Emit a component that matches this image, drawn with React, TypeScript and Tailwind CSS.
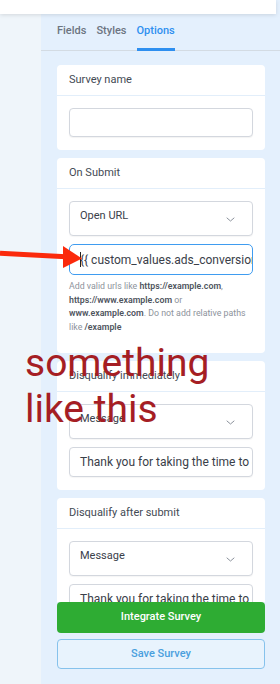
import React from "react";

const Chevron = () => (
  <svg width="9" height="5" viewBox="0 0 9 5" className="shrink-0">
    <path d="M1 1l3.5 3 3.5-3" fill="none" stroke="#8b919b" strokeWidth="1" strokeLinecap="round" strokeLinejoin="round" />
  </svg>
);

const Select = ({ label }: { label: string }) => (
  <div className="h-[35px] rounded-[4px] border border-[#d3d7de] bg-white flex items-start justify-between pl-[10px] pr-[17px] shadow-[0_1px_1px_rgba(0,0,0,0.04)]">
    <span className="pt-[7px] text-[11px] leading-[14px] text-[#3a4049]">{label}</span>
    <span className="self-center pt-[2px]"><Chevron /></span>
  </div>
);

const TextInput = ({ value }: { value: string }) => (
  <div className="h-[30px] min-w-0 rounded-[4px] border border-[#d3d7de] bg-white flex items-center pl-[10px] overflow-hidden whitespace-nowrap shadow-[0_1px_1px_rgba(0,0,0,0.04)]">
    <span className="text-[12px] leading-[16px] text-[#3a4049]">{value}</span>
  </div>
);

const Card = ({ title, children, pb = "pb-[13px]" }: { title: string; children?: React.ReactNode; pb?: string }) => (
  <div className="w-[208px] bg-white rounded-[4px] shrink-0">
    <div className="h-[31px] flex items-center pl-[12px] border-b border-[#e2eefa] text-[11px] text-[#434a54]">{title}</div>
    <div className={`px-[12px] pt-[12px] ${pb} flex flex-col gap-[8px]`}>{children}</div>
  </div>
);

const B = ({ children }: { children: React.ReactNode }) => <span className="font-semibold text-[#4f555e]">{children}</span>;

export default function App() {
  return (
    <div className="relative w-[280px] h-[684px] overflow-hidden bg-[#e4f0fd] flex flex-col" style={{ fontFamily: "Roboto, 'Noto Sans', sans-serif" }}>
      <div className="relative z-10 h-[14px] w-[276px] bg-white shadow-[0_1px_4px_rgba(0,0,0,0.12)] shrink-0" />
      <div className="flex flex-1 min-h-0">
        <div className="w-[41px] bg-[#eff5fa] shrink-0" />
        <div className="w-[239px] min-w-0 flex flex-col min-h-0 overflow-hidden">
          <div className="h-[37px] border-b border-[#d3dbe3] flex gap-[10px] pl-[16px] shrink-0">
            <div className="pt-[10px] text-[11px] leading-[14px] font-medium text-[#6c7581]">Fields</div>
            <div className="pt-[10px] text-[11px] leading-[14px] font-medium text-[#6c7581]">Styles</div>
            <div className="pt-[10px] text-[11px] leading-[14px] font-medium text-[#2e8ff0] border-b-[3px] border-[#2e8ff0] h-[37px] mb-[-1px]">Options</div>
          </div>
          <div className="flex-1 min-h-0 overflow-hidden pt-[14px] pl-[16px] flex flex-col gap-[8px]">
            <Card title="Survey name">
              <div className="h-[29px] rounded-[4px] border border-[#d3d7de] bg-white shadow-[0_1px_1px_rgba(0,0,0,0.05)]" />
            </Card>
            <Card title="On Submit" pb="pb-[19px]">
              <Select label="Open URL" />
              <div className="h-[31px] min-w-0 rounded-[5px] border-[1.5px] border-[#3f9cf0] bg-white flex items-center pl-[10px] overflow-hidden whitespace-nowrap relative">
                <span className="text-[12px] leading-[16px] text-[#3a4049]">{"{{ custom_values.ads_conversion_url }}"}</span>
                <span className="absolute left-[10px] top-[7px] w-[1px] h-[15px] bg-[#222]" />
              </div>
              <p className="mt-[-3px] text-[8.8px] leading-[13.5px] text-[#8d939b] whitespace-nowrap">
                Add valid urls like <B>https://example.com</B>,<br />
                <B>https://www.example.com</B> or<br />
                <B>www.example.com</B>. Do not add relative paths<br />
                like <B>/example</B>
              </p>
            </Card>
            <Card title="Disqualify immediately">
              <Select label="Message" />
              <TextInput value="Thank you for taking the time to complete this survey." />
            </Card>
            <Card title="Disqualify after submit">
              <Select label="Message" />
              <TextInput value="Thank you for taking the time to complete this survey." />
            </Card>
          </div>
          <div className="shrink-0 pl-[16px] pb-[15px] flex flex-col gap-[6px]">
            <button className="w-[208px] h-[31px] rounded-[4px] bg-[#2eac33] text-white text-[11px] font-medium">Integrate Survey</button>
            <button className="w-[208px] h-[30px] rounded-[4px] border border-[#86c2ec] bg-[#e8f3fd] text-[#4a9fdd] text-[11px] font-medium">Save Survey</button>
          </div>
        </div>
      </div>

      <svg className="absolute left-0 top-[240px] pointer-events-none" width="90" height="34" viewBox="0 240 90 34">
        <path d="M0 253.3 L66 256.8" stroke="#fb2a0c" strokeWidth="5" fill="none" />
        <path d="M63 246 L82 258.5 L63 268 Z" fill="#fb2a0c" />
      </svg>

      <div className="absolute left-[25px] top-[340px] text-[39px] leading-[46px] text-[#a51e24] pointer-events-none whitespace-nowrap" style={{ fontFamily: "Roboto, sans-serif" }}>
        something<br />like this
      </div>
    </div>
  );
}
